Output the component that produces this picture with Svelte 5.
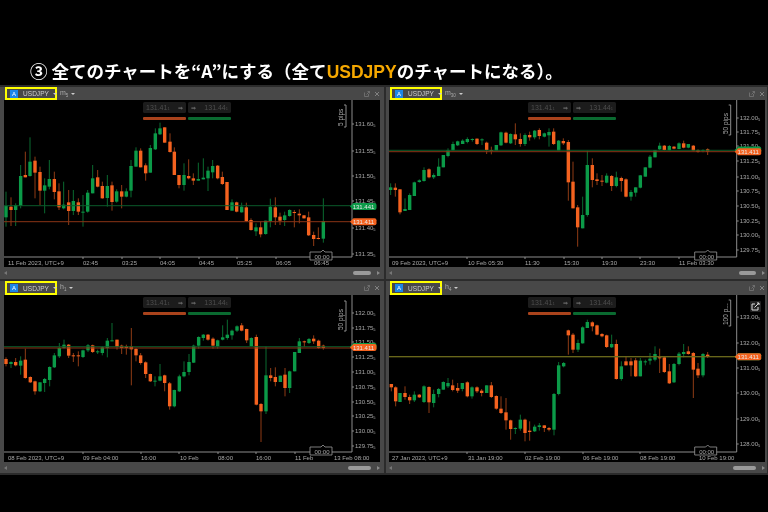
<script>
  const parse = (ox, oy, s) =>
    s.trim().split(/\s*;\s*/).filter(Boolean).map((row) => {
      const [x, h, l, t, b, c] = row.split(/\s+/);
      return { x: ox + x / 3, h: oy + h / 3, l: oy + l / 3, t: oy + t / 3, b: oy + Math.max(+b, +t + 3) / 3, c };
    });

  const c1 = parse(0, 110, `18 245 350 288 322 g;33 262 348 290 300 r;47 280 348 285 300 g;62 165 295 198 288 g;76 125 202 195 202 r;90 82 200 155 198 g;105 140 265 152 188 r;120 170 285 186 242 r;134 205 310 226 242 g;148 150 238 207 230 g;163 185 268 207 246 r;177 220 300 244 292 r;191 215 298 284 295 g;206 240 345 277 303 r;220 240 315 273 303 g;235 265 315 277 305 r;249 255 350 305 308 g;263 240 308 248 305 g;278 165 250 205 250 g;293 180 232 202 230 r;307 215 266 228 265 r;322 195 290 228 264 g;336 215 302 226 276 r;350 238 278 244 275 g;365 225 295 244 260 r;379 235 262 244 260 g;393 150 262 168 242 g;408 112 170 122 170 g;422 115 172 122 172 r;437 160 212 166 190 r;451 105 188 114 188 g;466 55 120 70 118 g;480 38 75 55 73 g;494 52 98 52 98 r`)
    .concat(parse(170, 110, `0 70 128 95 126 r;13 112 195 125 195 r;27 195 235 195 225 r;42 160 242 195 225 g;56 148 208 198 205 r;70 190 225 205 212 r;85 158 212 207 212 g;100 145 208 203 208 g;114 170 243 182 205 g;128 150 205 168 187 g;143 165 208 167 205 r;157 185 225 201 222 r;171 216 300 216 300 r;186 268 302 277 302 g;200 275 307 277 305 r;215 278 308 290 307 g;229 278 335 292 333 r;243 325 362 330 360 r;258 340 378 352 364 g;272 335 382 352 373 r;287 332 374 332 372 g;301 266 352 290 333 g;316 262 345 292 322 r;330 308 345 320 332 r;344 305 348 316 330 g;359 298 320 300 318 g;373 300 352 306 309 r;388 298 340 311 316 r;402 315 326 316 325 r;416 305 378 322 376 r;431 365 408 375 387 r;445 352 388 384 387 r;460 265 398 333 386 g`));

  const c2 = parse(384, 80, `20 310 345 322 330 g;34 310 350 323 330 r;48 328 403 328 397 r;63 355 392 387 393 g;77 340 390 345 390 g;91 305 348 307 348 g;106 298 308 301 306 g;120 262 305 270 303 g;135 265 295 268 292 r;149 280 297 285 292 g;164 235 288 260 288 g;178 225 262 225 262 g;192 205 232 210 228 g;207 185 212 192 211 g;221 182 198 184 196 g;236 178 192 182 192 g;250 172 190 177 186 g;265 175 185 177 178 g;279 175 195 176 192 r;294 175 195 178 181 g;308 185 222 188 210 r;322 200 223 210 212 r;337 195 212 195 212 g;351 155 198 157 196 g;366 155 190 158 188 r;380 160 192 162 190 g;394 130 195 163 178 r;409 160 200 177 192 r;423 160 198 165 192 g;437 155 182 165 172 r;452 150 178 152 172 g;466 145 178 150 168 r;481 158 172 160 170 g;495 145 200 156 166 g;509 145 195 155 192 r;524 180 212 182 212 g;538 175 195 183 190 r;553 180 362 186 307 r;567 245 385 305 385 r;581 375 500 382 442 r;596 350 445 405 445 g;610 212 410 255 405 g;625 235 322 255 300 r;639 280 315 298 303 r;654 285 318 302 305 r;668 280 310 287 308 g;683 285 333 288 318 r;697 275 322 292 318 g;712 290 335 294 303 r;726 295 352 298 350 r;741 330 362 336 350 g;755 322 350 322 338 g;769 285 325 286 323 g;784 262 290 262 290 g;798 225 265 230 263 g;813 210 232 210 232 g;827 188 210 197 208 g;841 195 212 197 210 r;856 195 212 198 211 g;870 198 208 200 206 r;885 187 208 190 207 g;899 182 205 190 203 r;913 192 205 192 203 g;928 195 214 197 212 r;942 208 218 210 216 r;957 208 217 210 213 g;971 205 225 208 215 r`);

  const c3 = parse(0, 278, `18 238 265 243 258 r;33 250 270 252 258 g;47 240 265 252 262 r;62 235 290 248 263 g;76 212 302 245 300 r;91 295 315 297 313 r;105 308 350 310 340 r;120 312 342 313 340 g;134 300 342 303 315 g;149 265 325 267 306 g;163 225 270 232 268 g;178 195 240 210 235 g;192 185 212 200 210 g;206 198 240 200 233 r;220 225 252 232 235 r;235 220 265 232 235 r;249 215 240 217 237 g;264 198 222 202 217 g;278 200 225 202 222 r;293 215 228 220 222 g;307 205 232 208 225 g;322 180 238 188 210 g;336 135 190 187 190 g;351 185 215 185 207 r;365 200 228 203 210 r;379 200 230 205 210 r;394 150 322 205 214 r;408 210 250 213 232 r;422 225 260 232 255 r;437 250 300 253 288 r;451 287 312 288 310 r;465 295 325 308 310 g;480 258 310 295 308 g;494 290 340 292 315 r;509 312 395 316 385 r;523 335 388 336 385 g;538 290 342 295 340 g;552 250 298 282 295 g;567 228 292 252 282 g;581 200 255 203 254 g;596 175 212 177 203 g;610 168 188 170 180 g;624 168 188 170 185 r;639 178 212 182 203 r;653 185 212 187 205 g;668 142 187 178 185 g;682 125 185 170 180 g;696 155 185 158 172 g;711 142 162 145 158 g;725 135 160 142 158 r;740 152 195 153 187 r;754 178 205 180 205 g;769 170 382 177 380 r;783 375 492 378 400 r;798 205 408 292 400 g;812 270 310 292 300 r;826 268 325 297 312 r;841 293 312 293 312 g;855 270 355 290 330 r;869 278 345 280 330 g;884 222 280 222 280 g;898 180 225 190 225 g;913 188 207 190 192 r;927 180 198 183 195 g;941 172 198 182 190 r;956 185 212 188 210 r;970 200 215 203 210 r`);

  const c4 = parse(384, 278, `22 318 340 318 328 r;35 325 385 328 370 r;48 345 372 345 372 g;63 325 365 345 357 r;77 350 378 357 367 r;91 340 372 350 367 g;106 348 360 350 358 r;120 322 375 325 372 g;135 325 405 327 373 r;149 335 388 348 375 g;164 330 358 333 348 g;178 310 335 312 335 g;192 300 330 315 325 g;206 305 340 322 336 r;221 315 345 330 338 r;235 315 340 315 333 g;250 310 358 313 355 r;264 325 362 328 355 g;279 325 345 328 340 r;293 333 355 338 345 r;308 322 345 322 345 g;322 312 360 322 357 r;337 352 395 354 392 r;351 355 408 392 405 r;366 360 455 403 427 r;380 425 485 427 453 r;394 448 468 450 453 g;409 410 458 425 452 g;423 422 490 425 465 r;437 430 488 458 462 r;452 440 462 446 460 g;466 435 458 442 447 g;481 442 462 442 450 r;495 447 460 450 455 r;510 345 472 348 455 g;524 252 352 262 348 g;539 252 268 255 265 g;553 155 230 157 172 r;567 165 225 170 215 r;582 185 222 195 215 g;596 145 197 148 196 g;610 125 150 132 150 g;625 130 160 133 145 r;639 140 172 142 170 r;654 165 178 168 175 r;668 170 210 172 207 r;683 170 210 198 208 g;697 185 305 198 303 r;712 250 308 265 303 g;726 235 262 250 262 r;741 240 295 250 262 r;755 240 297 247 295 r;769 240 295 248 295 g;784 245 262 250 252 g;798 225 260 242 248 g;813 205 250 228 245 g;827 212 285 238 241 r;841 235 285 238 282 r;856 258 318 280 316 r;870 255 315 258 313 g;885 222 262 227 258 g;899 198 238 222 228 g;913 205 230 220 228 r;928 222 360 225 275 r;942 255 300 272 292 r;957 225 298 228 292 g;971 222 240 230 236 r`);

  const charts = [
    {
      tf: 'm', sub: '5', x0: 4, y0: 100, axisX: 352, axisY: 257, candles: c1, thumb: 18, greenY: 205.7, redY: 221.7,
      greenLine: '#0b5a2a', redLine: '#8a3416', greenTag: 206.5, redTag: 221.7,
      prices: [['131.60', 124], ['131.55', 151], ['131.50', 176], ['131.45', 201], ['131.40', 228], ['131.35', 254]],
      times: [['11 Feb 2023, UTC+9', 8], ['02:45', 83], ['03:25', 122], ['04:05', 160], ['04:45', 199], ['05:25', 237], ['06:05', 276], ['06:45', 314]],
      ticks: [83, 122, 160, 199, 237, 276, 314], scale: '5 pips', scaleTop: 105, scaleBottom: 127, timeY: 265
    },
    {
      tf: 'm', sub: '30', x0: 389, y0: 100, axisX: 736.7, axisY: 257, candles: c2, thumb: 17, greenY: 150.3, redY: 151.7,
      greenLine: '#0b5a2a', redLine: '#8a3416', greenTag: 150, redTag: 151.7,
      prices: [['132.00', 118], ['131.75', 132], ['131.50', 146], ['131.25', 161], ['131.00', 177], ['130.75', 191], ['130.50', 206], ['130.25', 221], ['130.00', 235], ['129.75', 250]],
      times: [['09 Feb 2023, UTC+9', 392], ['10 Feb 05:30', 468], ['11:30', 525], ['15:30', 564], ['19:30', 602], ['23:30', 640], ['11 Feb 03:30', 679]],
      ticks: [467, 525, 564, 602, 640, 679], scale: '50 pips', scaleTop: 105, scaleBottom: 135, timeY: 265
    },
    {
      tf: 'h', sub: '1', x0: 4, y0: 295, axisX: 352, axisY: 452, candles: c3, thumb: 23, greenY: 346.7, redY: 348,
      greenLine: '#0b5a2a', redLine: '#8a3416', greenTag: 346.5, redTag: 347.5, lower: true,
      prices: [['132.00', 313], ['131.75', 328], ['131.50', 342], ['131.25', 357], ['131.00', 372], ['130.75', 387], ['130.50', 402], ['130.25', 416], ['130.00', 431], ['129.75', 446]],
      times: [['08 Feb 2023, UTC+9', 8], ['09 Feb 04:00', 83], ['16:00', 141], ['10 Feb', 180], ['08:00', 218], ['16:00', 256], ['11 Feb', 295], ['13 Feb 08:00', 334]],
      ticks: [83, 141, 179, 218, 256, 295], scale: '50 pips', scaleTop: 301, scaleBottom: 331, timeY: 460
    },
    {
      tf: 'h', sub: '4', x0: 389, y0: 295, axisX: 736.7, axisY: 452, candles: c4, thumb: 23, greenY: 356.7, redY: 356.7,
      greenLine: '#6d6a1c', redLine: '#6d6a1c', greenTag: 356.7, redTag: 356.7, lower: true, edit: true,
      prices: [['133.00', 317], ['132.00', 343], ['131.00', 368], ['130.00', 393], ['129.00', 419], ['128.00', 444]],
      times: [['27 Jan 2023, UTC+9', 392], ['31 Jan 19:00', 468], ['02 Feb 19:00', 525], ['06 Feb 19:00', 583], ['08 Feb 19:00', 640], ['10 Feb 19:00', 699]],
      ticks: [467, 525, 583, 640, 698], scale: '100 p...', scaleTop: 300, scaleBottom: 326, timeY: 460
    }
  ];
</script>

<div class="page">
  <h1 class="title">③ 全てのチャートを“A”にする（全て<span class="hl">USDJPY</span>のチャートになる）。</h1>

  <div class="grid">
    {#each charts as ch}
      <section class="panel" class:lower={ch.lower}>
        <header class="head">
          <div class="symbol">
            <span class="badge">A</span>
            <span class="sym">USDJPY</span>
            <span class="caret"></span>
          </div>
          <span class="tf">{ch.tf}<sub>{ch.sub}</sub></span>
          <span class="caret"></span>
          <span class="tools">
            <svg width="6" height="6" viewBox="0 0 6 6" fill="none" stroke="#777" stroke-width="0.8"><path d="M.5 1.5v4h4V3M2.5 3.5 5.5.5M3.5.5h2v2" /></svg>
            <svg width="6" height="6" viewBox="0 0 6 6" fill="none" stroke="#888" stroke-width="0.9"><path d="M1 1l4 4M5 1 1 5" /></svg>
          </span>
        </header>

        <div class="chart">
          <svg class="plot" width="376" height="167" viewBox="{ch.x0} {ch.y0} 376 167">
            {#each ch.candles as k}
              <line x1={k.x} x2={k.x} y1={k.h} y2={k.l} class={k.c === 'g' ? 'wick-g' : 'wick-r'} />
            {/each}
            {#each ch.candles as k}
              <rect x={k.x - 1.7} y={k.t} width="3.4" height={k.b - k.t} class={k.c === 'g' ? 'body-g' : 'body-r'} />
            {/each}

            <line x1={ch.x0} x2={ch.axisX} y1={ch.greenY} y2={ch.greenY} stroke={ch.greenLine} />
            <line x1={ch.x0} x2={ch.axisX} y1={ch.redY} y2={ch.redY} stroke={ch.redLine} />

            <path class="axis" d="M{ch.axisX} {ch.y0}V{ch.axisY}H{ch.x0}" />
            {#each ch.ticks as t}
              <line class="axis" x1={t} x2={t} y1={ch.axisY} y2={ch.axisY + 2} />
            {/each}
            {#each ch.prices as p}
              <line class="axis" x1={ch.axisX} x2={ch.axisX + 2} y1={p[1]} y2={p[1]} />
              <text class="lbl" x={ch.axisX + 3} y={p[1] + 2}>{p[0]}<tspan class="frac" dy="1">5</tspan></text>
            {/each}
            {#each ch.times as t}
              <text class="lbl" x={t[1]} y={ch.timeY}>{t[0]}</text>
            {/each}

            <path class="scale" d="M{ch.axisX - 8} {ch.scaleTop}h2V{ch.scaleBottom}h-2" />
            <text class="lbl scale-text" transform="translate({ch.axisX - 9} {ch.scaleBottom - 1}) rotate(-90)">{ch.scale}</text>

            <g transform="translate({ch.axisX - 40} {ch.axisY})" class="timer">
              <path d="M-2 -5h11l2 -2 2 2h7v8h-22z" />
            </g>
            <text class="timer-text" x={ch.axisX - 37.5} y={ch.axisY + 1.5}>00:00</text>

            <g transform="translate({ch.axisX - 2} {ch.greenTag})">
              <path class="tag-g" d="M0 0l3.5 -3.5h21a2 2 0 0 1 2 2v3a2 2 0 0 1 -2 2h-21z" />
              {#if ch.redTag - ch.greenTag > 5}
                <text class="tag-text" x="13.5" y="2.2">131.44<tspan>1</tspan></text>
              {/if}
            </g>
            <g transform="translate({ch.axisX - 2} {ch.redTag})">
              <path class="tag-r" d="M0 0l3.5 -3.5h21a2 2 0 0 1 2 2v3a2 2 0 0 1 -2 2h-21z" />
              <text class="tag-text" x="13.5" y="2.2">131.41<tspan>1</tspan></text>
            </g>
          </svg>

          <div class="spread">
            <div class="side">
              <div class="btn"><span>131.41<small>1</small></span><b>➡</b></div>
              <i class="bar sell"></i>
            </div>
            <div class="side">
              <div class="btn"><b>➡</b><span>131.44<small>1</small></span></div>
              <i class="bar buy"></i>
            </div>
          </div>

          {#if ch.edit}
            <div class="edit">
              <svg width="9" height="9" viewBox="0 0 9 9" fill="none" stroke="#ddd" stroke-width="1"><path d="M7 5v3H1V2h3M3.5 5.5 8 1M6 1h2v2" /></svg>
            </div>
          {/if}
        </div>

        <footer class="foot">
          <span class="arrow left"></span>
          <span class="right">
            <i class="thumb" style="width:{ch.thumb}px"></i>
            <span class="arrow"></span>
          </span>
        </footer>
      </section>
    {/each}
  </div>
</div>

<style>
  :global(body) {
    margin: 0;
    background: #000;
  }
  .page {
    width: 768px;
    height: 512px;
    background: #000;
    overflow: hidden;
    font-family: "Liberation Sans", Arial, sans-serif;
    filter: blur(0.35px);
  }
  .title {
    box-sizing: border-box;
    height: 85px;
    margin: 0;
    padding: 58px 0 0 30px;
    color: #fff;
    font: bold 17.5px/26px "Noto Sans CJK JP", "Liberation Sans", sans-serif;
    white-space: nowrap;
  }
  .hl {
    color: #f6a800;
    font-family: "Liberation Sans", "Noto Sans CJK JP", sans-serif;
  }
  .grid {
    display: grid;
    grid-template-columns: 384px 381px;
    grid-auto-rows: 192px;
    column-gap: 2px;
    row-gap: 2px;
    padding: 2px 0;
    background: #2b2b2b;
    width: 768px;
    box-sizing: border-box;
  }
  .panel {
    display: flex;
    flex-direction: column;
    background: #484848;
    padding: 0 4px;
    min-width: 0;
  }
  .panel:nth-child(even) {
    padding: 0 2px 0 3px;
  }
  .head {
    display: flex;
    align-items: center;
    height: 13px;
    flex: none;
    gap: 2px;
    font-size: 6px;
    color: #bbb;
  }
  .panel.lower .head {
    height: 14px;
  }
  .symbol {
    display: flex;
    align-items: center;
    gap: 3px;
    box-sizing: border-box;
    height: 100%;
    width: 52px;
    margin-left: 1px;
    padding-left: 3px;
    border: 2px solid #ffff00;
    position: relative;
    z-index: 1;
  }
  .badge {
    width: 8px;
    height: 8px;
    flex: none;
    background: #1c86e8;
    color: #fff;
    font-size: 6px;
    line-height: 8px;
    text-align: center;
  }
  .sym {
    font-size: 6.5px;
    color: #d0d0d0;
    margin-left: 2px;
    letter-spacing: 0.05px;
  }
  .caret {
    width: 0;
    height: 0;
    border: 2px solid transparent;
    border-top: 2.5px solid #ccc;
    border-bottom: 0;
    margin-left: 1px;
  }
  .tf {
    font-size: 7px;
    color: #aaa;
    margin-left: 1px;
    line-height: 1;
  }
  .tf sub {
    font-size: 4.5px;
    vertical-align: -2px;
  }
  .tools {
    margin-left: auto;
    display: flex;
    gap: 4px;
    margin-right: 0;
  }
  .chart {
    position: relative;
    width: 376px;
    height: 167px;
    flex: none;
    background: #000;
  }
  .plot {
    display: block;
  }
  .wick-g {
    stroke: #0a6a30;
  }
  .wick-r {
    stroke: #8f3b15;
  }
  .body-g {
    fill: #0b9a48;
  }
  .body-r {
    fill: #f4621f;
  }
  .axis {
    stroke: #8c8c8c;
    fill: none;
  }
  .scale {
    stroke: #8c8c8c;
    fill: none;
  }
  .lbl {
    fill: #a8a8a8;
    font-size: 6px;
    font-family: "Liberation Sans", Arial, sans-serif;
  }
  .frac {
    font-size: 4px;
  }
  .scale-text {
    font-size: 6.5px;
  }
  .timer path {
    fill: #000;
    stroke: #9a9a9a;
    stroke-width: 0.8;
  }
  .timer-text {
    fill: #a8a8a8;
    font-size: 6px;
    font-family: "Liberation Sans", Arial, sans-serif;
  }
  .tag-g {
    fill: #0b9a48;
  }
  .tag-r {
    fill: #f4621f;
  }
  .tag-text {
    fill: #e8e8e8;
    font-size: 6px;
    text-anchor: middle;
    font-family: "Liberation Sans", Arial, sans-serif;
  }
  .spread {
    position: absolute;
    left: 139px;
    top: 2px;
    display: flex;
    gap: 2px;
  }
  .side {
    display: flex;
    flex-direction: column;
    gap: 4px;
    width: 43px;
  }
  .btn {
    display: flex;
    align-items: center;
    justify-content: space-between;
    box-sizing: border-box;
    height: 11px;
    padding: 0 3px;
    background: #1c1c1c;
    border-radius: 1.5px;
    color: #4e4e4e;
    font-size: 7px;
    white-space: nowrap;
  }
  .btn small {
    font-size: 4px;
  }
  .btn b {
    font-size: 6px;
    font-weight: bold;
    color: #666;
    font-family: "DejaVu Sans", sans-serif;
  }
  .bar {
    display: block;
    height: 3px;
    border-radius: 1px;
  }
  .sell {
    background: #a9431c;
  }
  .buy {
    background: #0a6a30;
  }
  .edit {
    position: absolute;
    right: 4px;
    top: 6px;
    width: 11px;
    height: 11px;
    background: #222;
    border-radius: 1px;
    display: flex;
    align-items: center;
    justify-content: center;
  }
  .foot {
    flex: 1;
    display: flex;
    align-items: center;
    justify-content: space-between;
    padding: 0 0 0 0;
  }
  .right {
    display: flex;
    align-items: center;
    gap: 6px;
  }
  .thumb {
    display: block;
    height: 4px;
    border-radius: 2px;
    background: #9a9a9a;
  }
  .arrow {
    width: 0;
    height: 0;
    border: 2px solid transparent;
    border-left: 3px solid #8a8a8a;
    border-right: 0;
  }
  .arrow.left {
    border-left: 0;
    border-right: 3px solid #777;
  }
</style>
